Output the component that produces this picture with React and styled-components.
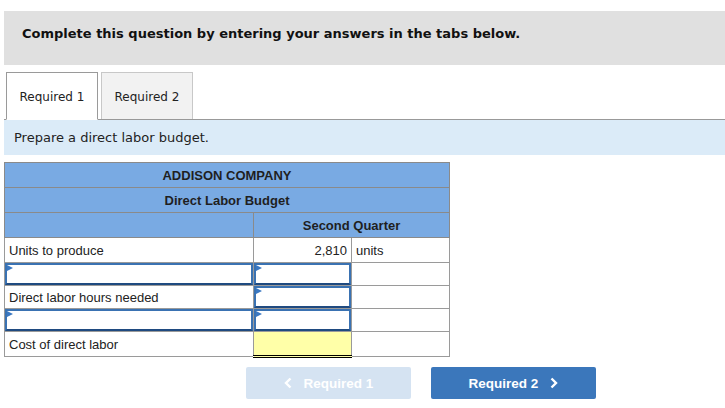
import React from "react";
import styled, { createGlobalStyle } from "styled-components";

const Global = createGlobalStyle`
  html, body { margin: 0; padding: 0; background: #fff; }
  body { font-family: "DejaVu Sans", Verdana, sans-serif; color: #222; }
`;

const Page = styled.div`
  padding: 11px 0 0 4px;
`;

const Banner = styled.div`
  height: 54px;
  box-sizing: border-box;
  background: #e0e0e0;
  padding: 15px 0 0 18px;
  font-weight: bold;
  font-size: 13px;
  line-height: 16px;
  color: #111;
`;

const TabBar = styled.div`
  display: flex;
  margin-top: 7px;
  padding-left: 2px;
  gap: 3px;
  border-bottom: 1px solid #999;
  height: 47px;
`;

const Tab = styled.div`
  width: 92px;
  box-sizing: border-box;
  display: flex;
  align-items: center;
  justify-content: center;
  padding-top: 1px;
  font-size: 12px;
  color: #222;
  background: ${(p) => (p.$active ? "#fff" : "#f2f2f2")};
  border: 1px solid ${(p) => (p.$active ? "#9a9a9a" : "#c8c8c8")};
  border-bottom: ${(p) => (p.$active ? "1px solid #fff" : "none")};
  height: ${(p) => (p.$active ? "48px" : "47px")};
`;

const Instruction = styled.div`
  height: 35px;
  background: #dbebf8;
  display: flex;
  align-items: center;
  padding-left: 10px;
  font-size: 13px;
  color: #222;
`;

const Table = styled.table`
  margin-top: 7px;
  width: 445px;
  border-collapse: collapse;
  font-family: "Liberation Sans", Arial, sans-serif;
  font-size: 13px;
  color: #222;
  table-layout: fixed;
  border: 1px solid #8a8a8a;
`;

const Row = styled.tr`
  height: ${(p) => p.$h}px;
`;

const HeadCell = styled.td`
  background: #79aae3;
  border: 1px solid #8a8a8a;
  text-align: center;
  font-weight: bold;
  padding: 0;
  color: #1f1f1f;
`;

const Cell = styled.td`
  border: 1px solid #9a9a9a;
  padding: 0 4px;
  text-align: ${(p) => (p.$right ? "right" : "left")};
  background: ${(p) => (p.$total ? "#ffffa8" : "#fff")};
  ${(p) => (p.$total ? "border-bottom: 3px double #000;" : "")}
  white-space: nowrap;
`;

const InputCell = styled.td`
  border: 1px solid #9a9a9a;
  padding: 0;
`;

const InputBox = styled.div`
  position: relative;
  height: 100%;
  min-height: 22px;
  box-sizing: border-box;
  border: 2px solid #3a72b2;
  border-bottom-color: #1f4a80;
  background: #fff;
  &::before {
    content: "";
    position: absolute;
    left: 0;
    top: 0;
    border-top: 3px solid transparent;
    border-bottom: 3px solid transparent;
    border-left: 6px solid #3a78c2;
  }
`;

const ButtonRow = styled.div`
  display: flex;
  gap: 20px;
  margin-top: 9px;
  padding-left: 242px;
`;

const NavButton = styled.div`
  width: 165px;
  height: 32px;
  border-radius: 2px;
  display: flex;
  align-items: center;
  justify-content: center;
  gap: 12px;
  font-family: "Liberation Sans", Arial, sans-serif;
  font-weight: bold;
  font-size: 13.5px;
  color: #fff;
  background: ${(p) => (p.$disabled ? "#d5e3f2" : "#3b77bb")};
`;

const Chevron = ({ dir }) => (
  <svg width="8" height="12" viewBox="0 0 8 12">
    <path
      d={dir === "left" ? "M6.5 1.5 L2 6 L6.5 10.5" : "M1.5 1.5 L6 6 L1.5 10.5"}
      fill="none"
      stroke="#fff"
      strokeWidth="2.4"
    />
  </svg>
);

export default function App() {
  return (
    <>
      <Global />
      <Page>
        <Banner>Complete this question by entering your answers in the tabs below.</Banner>
        <TabBar>
          <Tab $active>Required 1</Tab>
          <Tab>Required 2</Tab>
        </TabBar>
        <Instruction>Prepare a direct labor budget.</Instruction>
        <Table>
          <colgroup>
            <col style={{ width: 249 }} />
            <col style={{ width: 98 }} />
            <col style={{ width: 98 }} />
          </colgroup>
          <tbody>
            <Row $h={25}>
              <HeadCell colSpan={3}>ADDISON COMPANY</HeadCell>
            </Row>
            <Row $h={25}>
              <HeadCell colSpan={3}>Direct Labor Budget</HeadCell>
            </Row>
            <Row $h={25}>
              <HeadCell />
              <HeadCell colSpan={2}>Second Quarter</HeadCell>
            </Row>
            <Row $h={25}>
              <Cell>Units to produce</Cell>
              <Cell $right>2,810</Cell>
              <Cell>units</Cell>
            </Row>
            <Row $h={23}>
              <InputCell><InputBox /></InputCell>
              <InputCell><InputBox /></InputCell>
              <Cell />
            </Row>
            <Row $h={23}>
              <Cell>Direct labor hours needed</Cell>
              <InputCell><InputBox /></InputCell>
              <Cell />
            </Row>
            <Row $h={23}>
              <InputCell><InputBox /></InputCell>
              <InputCell><InputBox /></InputCell>
              <Cell />
            </Row>
            <Row $h={25}>
              <Cell>Cost of direct labor</Cell>
              <Cell $total />
              <Cell />
            </Row>
          </tbody>
        </Table>
        <ButtonRow>
          <NavButton $disabled>
            <Chevron dir="left" />
            <span>Required 1</span>
          </NavButton>
          <NavButton>
            <span>Required 2</span>
            <Chevron dir="right" />
          </NavButton>
        </ButtonRow>
      </Page>
    </>
  );
}
